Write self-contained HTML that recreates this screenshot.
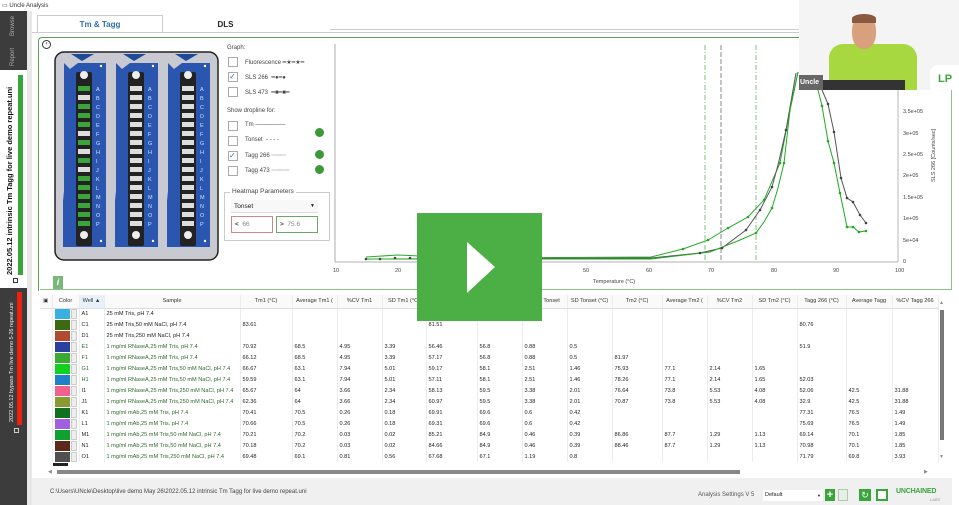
<!DOCTYPE html>
<html><head><meta charset="utf-8"><style>
*{margin:0;padding:0;box-sizing:border-box}
body{width:959px;height:505px;overflow:hidden;background:#fff;font-family:"Liberation Sans",sans-serif;position:relative;color:#222}
.a{position:absolute}
.v{position:absolute;transform:rotate(-90deg);transform-origin:left top;white-space:nowrap}
table{border-collapse:collapse;table-layout:fixed;position:absolute;left:40px;top:295px;font-size:5.6px}
td,th{height:11px;padding:0 2px;white-space:nowrap;overflow:hidden;text-align:left;font-weight:normal;border-right:1px solid #ececec}
th{height:13px;text-align:center;color:#333;border-bottom:1px solid #ddd;background:#fafafa}
.sw{display:inline-block;width:15px;height:10px;vertical-align:middle}
.dd{display:inline-block;width:6px;height:10px;background:#eee;border:1px solid #ccc;vertical-align:middle;margin-left:1px}
.g{color:#2d6a2d}
.cb{position:absolute;width:10px;height:10px;border:1px solid #aaa;background:#fff}
.lb{position:absolute;font-size:6px;color:#444}
.gb{position:absolute;width:9px;height:9px;border-radius:50%;background:#3a9a3a}
</style></head><body>
<!-- title -->
<div class="a" style="left:2px;top:2px;font-size:6px;color:#333">▭ Uncle Analysis</div>
<!-- sidebar -->
<div class="a" style="left:0;top:11px;width:27px;height:494px;background:#3c3c3c"></div>
<div class="v" style="left:10px;top:36px;font-size:6px;color:#aaa">Browse</div>
<div class="v" style="left:10px;top:66px;font-size:6px;color:#aaa">Report</div>
<div class="a" style="left:0;top:70px;width:27px;height:218px;background:#fff"></div>
<div class="v" style="left:5px;top:275px;font-size:7.5px;font-weight:bold;color:#111">2022.05.12 intrinsic Tm Tagg for live demo repeat.uni</div>
<div class="a" style="left:18px;top:75px;width:5px;height:200px;background:#3aa53a"></div>
<div class="a" style="left:13px;top:278px;width:5px;height:5px;border:1px solid #333"></div>
<div class="v" style="left:9px;top:422px;font-size:5.5px;color:#eee">2022.05.12 bypass Tm live demo 5-26 repeat.uni</div>
<div class="a" style="left:17px;top:292px;width:5px;height:133px;background:#f02010"></div>
<div class="a" style="left:14px;top:428px;width:5px;height:5px;border:1px solid #ccc"></div>
<div class="a" style="left:27px;top:11px;width:5px;height:494px;background:#e8e8e8"></div>
<!-- tabs -->
<div class="a" style="left:37px;top:15px;width:126px;height:18px;border:1px solid #ccc;border-bottom:none;background:#fff;font-size:8px;font-weight:bold;color:#2a6fb0;text-align:center;line-height:18px">Tm &amp; Tagg</div>
<div class="a" style="left:163px;top:17px;width:125px;height:16px;font-size:8px;font-weight:bold;color:#222;text-align:center;line-height:16px">DLS</div>
<div class="a" style="left:32px;top:32px;width:927px;height:1px;background:#ccc"></div>
<!-- panel border -->
<div class="a" style="left:38px;top:37px;width:762px;height:254px;border:1px solid #5aa55a;border-right:none;border-bottom:none;border-radius:4px 0 0 0"></div>
<div class="a" style="left:40px;top:289px;width:912px;height:1px;background:#8ac48a"></div>
<div class="a" style="left:951px;top:90px;width:1px;height:200px;background:#8ac48a"></div>
<div class="a" style="left:42px;top:40px;width:9px;height:9px;border:1px solid #333;border-radius:50%;font-size:6px;line-height:7px;text-align:center">‹</div>
<!-- plate -->
<svg class="a" style="left:54px;top:51px" width="166" height="211">
<rect x="1" y="1" width="163" height="208" rx="9" fill="#c9c9d1" stroke="#222" stroke-width="1.5"/>
<g id="s">
<polygon points="10,12 10,140 9,150 9,196 52,196 52,12 24,12 16,18" fill="#2a56b0"/>
<polygon points="17,3 40,3 28,10" fill="#1e4a9a"/>
<rect x="22" y="21" width="16" height="174" fill="#222" rx="2"/>
<circle cx="30" cy="24" r="4" fill="#eee"/><circle cx="30" cy="184" r="4" fill="#eee"/>
<circle cx="47" cy="15" r="1.2" fill="#fff"/><circle cx="47" cy="190" r="1.2" fill="#fff"/>
</g>
<use href="#s" x="52"/><use href="#s" x="104"/>
<g fill="#ddd">
<rect x="24" y="35" width="12" height="5" fill="#3aa53a"/><rect x="24" y="44" width="12" height="5"/><rect x="24" y="53" width="12" height="5" fill="#3aa53a"/><rect x="24" y="62" width="12" height="5" fill="#3aa53a"/><rect x="24" y="71" width="12" height="5" fill="#3aa53a"/><rect x="24" y="80" width="12" height="5"/><rect x="24" y="89" width="12" height="5" fill="#3aa53a"/><rect x="24" y="98" width="12" height="5"/><rect x="24" y="107" width="12" height="5" fill="#3aa53a"/><rect x="24" y="116" width="12" height="5"/><rect x="24" y="125" width="12" height="5" fill="#3aa53a"/><rect x="24" y="134" width="12" height="5" fill="#3aa53a"/><rect x="24" y="143" width="12" height="5" fill="#3aa53a"/><rect x="24" y="152" width="12" height="5" fill="#3aa53a"/><rect x="24" y="161" width="12" height="5" fill="#3aa53a"/><rect x="24" y="170" width="12" height="5" fill="#3aa53a"/>
</g>
<g fill="#ddd" id="c2">
<rect x="76" y="35" width="12" height="5"/><rect x="76" y="44" width="12" height="5"/><rect x="76" y="53" width="12" height="5"/><rect x="76" y="62" width="12" height="5"/><rect x="76" y="71" width="12" height="5"/><rect x="76" y="80" width="12" height="5"/><rect x="76" y="89" width="12" height="5"/><rect x="76" y="98" width="12" height="5"/><rect x="76" y="107" width="12" height="5"/><rect x="76" y="116" width="12" height="5"/><rect x="76" y="125" width="12" height="5"/><rect x="76" y="134" width="12" height="5"/><rect x="76" y="143" width="12" height="5"/><rect x="76" y="152" width="12" height="5"/><rect x="76" y="161" width="12" height="5"/><rect x="76" y="170" width="12" height="5"/>
</g>
<use href="#c2" x="52"/>
<g font-size="5.5" fill="#cfe0ff" font-family="Liberation Sans">
<text x="42" y="40">A</text><text x="42" y="49">B</text><text x="42" y="58">C</text><text x="42" y="67">D</text><text x="42" y="76">E</text><text x="42" y="85">F</text><text x="42" y="94">G</text><text x="42" y="103">H</text><text x="42" y="112">I</text><text x="42" y="121">J</text><text x="42" y="130">K</text><text x="42" y="139">L</text><text x="42" y="148">M</text><text x="42" y="157">N</text><text x="42" y="166">O</text><text x="42" y="175">P</text>
<text x="94" y="40">A</text><text x="94" y="49">B</text><text x="94" y="58">C</text><text x="94" y="67">D</text><text x="94" y="76">E</text><text x="94" y="85">F</text><text x="94" y="94">G</text><text x="94" y="103">H</text><text x="94" y="112">I</text><text x="94" y="121">J</text><text x="94" y="130">K</text><text x="94" y="139">L</text><text x="94" y="148">M</text><text x="94" y="157">N</text><text x="94" y="166">O</text><text x="94" y="175">P</text>
<text x="146" y="40">A</text><text x="146" y="49">B</text><text x="146" y="58">C</text><text x="146" y="67">D</text><text x="146" y="76">E</text><text x="146" y="85">F</text><text x="146" y="94">G</text><text x="146" y="103">H</text><text x="146" y="112">I</text><text x="146" y="121">J</text><text x="146" y="130">K</text><text x="146" y="139">L</text><text x="146" y="148">M</text><text x="146" y="157">N</text><text x="146" y="166">O</text><text x="146" y="175">P</text>
</g>
</svg>
<!-- options -->
<div class="lb" style="left:227px;top:45px">Graph:</div>
<div class="cb" style="left:228px;top:57px"></div><div class="lb" style="left:245px;top:59px">Fluorescence ━★━★━</div>
<div class="cb" style="left:228px;top:72px;color:#2a80d0;font-size:8px;line-height:8px">✓</div><div class="lb" style="left:245px;top:74px">SLS 266 &nbsp;━●━●</div>
<div class="cb" style="left:228px;top:87px"></div><div class="lb" style="left:245px;top:89px">SLS 473 &nbsp;━■━■━</div>
<div class="lb" style="left:227px;top:108px">Show dropline for:</div>
<div class="cb" style="left:228px;top:121px"></div><div class="lb" style="left:245px;top:122px">Tm ───────</div>
<div class="cb" style="left:228px;top:136px"></div><div class="lb" style="left:245px;top:137px">Tonset &nbsp;- - - -</div>
<div class="cb" style="left:228px;top:151px;color:#2a80d0;font-size:8px;line-height:8px">✓</div><div class="lb" style="left:245px;top:152px">Tagg 266 ┈┈┈┈</div>
<div class="cb" style="left:228px;top:166px"></div><div class="lb" style="left:245px;top:167px">Tagg 473 ┈┈┈┈┈</div>
<div class="gb" style="left:315px;top:128px"></div><div class="gb" style="left:315px;top:150px"></div><div class="gb" style="left:315px;top:165px"></div>
<div class="a" style="left:224px;top:192px;width:106px;height:49px;border:1px solid #ccc"></div>
<div class="lb" style="left:230px;top:188px;background:#fff;padding:0 2px;font-size:6.5px">Heatmap Parameters</div>
<div class="a" style="left:231px;top:200px;width:87px;height:13px;background:#f8f8f8;border-bottom:1px solid #ddd;font-size:6.5px;line-height:13px;padding-left:3px">Tonset<span style="float:right;margin-right:3px;font-size:5px">▼</span></div>
<div class="a" style="left:231px;top:216px;width:42px;height:17px;border:1px solid #c88;font-size:6.5px;line-height:15px;padding-left:3px;color:#888"><b style="color:#444">&lt;</b> &nbsp;66</div>
<div class="a" style="left:276px;top:216px;width:42px;height:17px;border:1px solid #6a6;font-size:6.5px;line-height:15px;padding-left:3px;color:#888"><b style="color:#444">&gt;</b> &nbsp;75.6</div>
<div class="a" style="left:53px;top:276px;width:10px;height:13px;background:#7ab87a;color:#fff;font-size:9px;font-style:italic;font-weight:bold;text-align:center;line-height:13px">i</div>
<!-- chart -->
<div class="a" style="left:330px;top:29px;width:470px;height:1px;background:#ccc"></div>
<div class="a" style="left:330px;top:37px;width:470px;height:1px;background:#5aa55a"></div>
<svg class="a" style="left:0;top:0" width="959" height="290" font-family="Liberation Sans">
<line x1="335" y1="44" x2="335" y2="262" stroke="#888" stroke-width="0.7"/>
<line x1="335" y1="262" x2="898" y2="262" stroke="#999" stroke-width="0.7"/>
<line x1="898" y1="90" x2="898" y2="262" stroke="#999" stroke-width="0.7"/>
<g stroke-width="1" stroke-dasharray="5,2,1,2"><line x1="705" y1="45" x2="705" y2="262" stroke="#7ac47a"/><line x1="721" y1="45" x2="721" y2="262" stroke="#888" stroke-dasharray="5,2"/><line x1="756" y1="45" x2="756" y2="262" stroke="#7ac47a"/></g>
<polyline fill="none" stroke="#2aaa2a" stroke-width="1" points="366,257 398,255 420,256 460,258 651,257 683,249 708,240 728,228 748,217 764,200 780,163 790,110 798,72"/>
<polyline fill="none" stroke="#555" stroke-width="1" points="366,259 651,258 700,253 722,248 746,230 760,210 772,187 778,165 786,130 796,73"/>
<polyline fill="none" stroke="#22aa22" stroke-width="1" points="366,259 651,259 710,252 740,240 756,233 764,222 772,208 778,188 784,163 790,110 798,72"/>
<polyline fill="none" stroke="#555" stroke-width="1" points="822,90 828,104 834,132 841,178 847,198 853,202 860,215 866,223"/>
<polyline fill="none" stroke="#22aa22" stroke-width="1" points="818,90 822,106 828,141 834,163 840,193 847,227 853,227 859,232 866,231"/>
<g fill="#444"><circle cx="366" cy="259" r="1.3"/><circle cx="380" cy="259" r="1.3"/><circle cx="395" cy="258" r="1.3"/><circle cx="410" cy="258" r="1.3"/><circle cx="700" cy="253" r="1.3"/><circle cx="722" cy="248" r="1.3"/><circle cx="746" cy="230" r="1.3"/><circle cx="760" cy="210" r="1.3"/><circle cx="772" cy="187" r="1.3"/><circle cx="786" cy="130" r="1.3"/><circle cx="828" cy="104" r="1.3"/><circle cx="834" cy="132" r="1.3"/><circle cx="841" cy="178" r="1.3"/><circle cx="847" cy="198" r="1.3"/><circle cx="853" cy="202" r="1.3"/><circle cx="860" cy="215" r="1.3"/><circle cx="866" cy="223" r="1.3"/></g>
<g fill="#22aa22"><circle cx="683" cy="249" r="1.3"/><circle cx="708" cy="240" r="1.3"/><circle cx="728" cy="228" r="1.3"/><circle cx="748" cy="217" r="1.3"/><circle cx="764" cy="200" r="1.3"/><circle cx="780" cy="163" r="1.3"/><circle cx="756" cy="233" r="1.3"/><circle cx="772" cy="208" r="1.3"/><circle cx="784" cy="163" r="1.3"/><circle cx="822" cy="106" r="1.3"/><circle cx="828" cy="141" r="1.3"/><circle cx="834" cy="163" r="1.3"/><circle cx="840" cy="193" r="1.3"/><circle cx="847" cy="227" r="1.3"/><circle cx="853" cy="227" r="1.3"/><circle cx="859" cy="232" r="1.3"/><circle cx="866" cy="231" r="1.3"/></g>
<g font-size="5.5" fill="#444"><text x="333" y="272">10</text><text x="395" y="272">20</text><text x="457" y="272">30</text><text x="520" y="272">40</text><text x="583" y="272">50</text><text x="646" y="272">60</text><text x="708" y="272">70</text><text x="771" y="272">80</text><text x="833" y="272">90</text><text x="895" y="272">100</text>
<text x="593" y="283">Temperature (°C)</text>
<text x="903" y="113">3.5e+05</text><text x="903" y="135">3e+05</text><text x="903" y="156">2.5e+05</text><text x="903" y="177">2e+05</text><text x="903" y="199">1.5e+05</text><text x="903" y="220">1e+05</text><text x="903" y="242">5e+04</text><text x="903" y="263">0</text>
<text transform="translate(935,182) rotate(-90)">SLS 266 [Counts/sec]</text></g>
</svg>
<!-- webcam -->
<div class="a" style="left:799px;top:0;width:160px;height:90px;background:#f4f4f4"></div>
<div class="a" style="left:829px;top:44px;width:88px;height:46px;background:#a8d840;border-radius:14px 14px 0 0"></div>
<div class="a" style="left:852px;top:15px;width:24px;height:34px;background:#d9a07e;border-radius:45%"></div>
<div class="a" style="left:852px;top:14px;width:24px;height:9px;background:#8a5a40;border-radius:50% 50% 0 0"></div>
<div class="a" style="left:822px;top:80px;width:83px;height:10px;background:#333"></div>
<div class="a" style="left:930px;top:65px;width:29px;height:25px;background:#fff;border-radius:8px 0 0 0;color:#3aa53a;font-weight:bold;font-size:11px;padding:8px 0 0 8px">LP</div>
<div class="a" style="left:799px;top:75px;width:24px;height:15px;background:#666;color:#fff;font-size:7px;font-weight:bold;line-height:15px;padding-left:1px">Uncle</div>
<!-- table -->
<table>
<colgroup><col style="width:12px"><col style="width:24px"><col style="width:25px"><col style="width:136px"><col style="width:52px"><col style="width:45px"><col style="width:45px"><col style="width:44px"><col style="width:51px"><col style="width:45px"><col style="width:45px"><col style="width:45px"><col style="width:50px"><col style="width:45px"><col style="width:45px"><col style="width:45px"><col style="width:49px"><col style="width:46px"><col style="width:46px"></colgroup>
<tr><th>▣</th><th>Color</th><th style="background:#e8f0fa">Well ▲</th><th>Sample</th><th>Tm1 (°C)</th><th>Average Tm1 (</th><th>%CV Tm1</th><th>SD Tm1 (°C)</th><th>Tonset (°C)</th><th>Average Tonse</th><th>%CV Tonset</th><th>SD Tonset (°C)</th><th>Tm2 (°C)</th><th>Average Tm2 (</th><th>%CV Tm2</th><th>SD Tm2 (°C)</th><th>Tagg 266 (°C)</th><th>Average Tagg</th><th>%CV Tagg 266</th></tr>
<tr><td></td><td><span class="sw" style="background:#3ab0e0"></span><span class="dd"></span></td><td>A1</td><td>25 mM Tris, pH 7.4</td><td></td><td></td><td></td><td></td><td></td><td></td><td></td><td></td><td></td><td></td><td></td><td></td><td></td><td></td><td></td></tr>
<tr><td></td><td><span class="sw" style="background:#3d6a10"></span><span class="dd"></span></td><td>C1</td><td>25 mM Tris,50 mM NaCl, pH 7.4</td><td>83.61</td><td></td><td></td><td></td><td>81.51</td><td></td><td></td><td></td><td></td><td></td><td></td><td></td><td>80.76</td><td></td><td></td></tr>
<tr><td></td><td><span class="sw" style="background:#b04a30"></span><span class="dd"></span></td><td>D1</td><td>25 mM Tris,250 mM NaCl, pH 7.4</td><td></td><td></td><td></td><td></td><td></td><td></td><td></td><td></td><td></td><td></td><td></td><td></td><td></td><td></td><td></td></tr>
<tr><td></td><td><span class="sw" style="background:#2a3fa0"></span><span class="dd"></span></td><td class="g">E1</td><td class="g">1 mg/ml RNaseA,25 mM Tris, pH 7.4</td><td>70.92</td><td>68.5</td><td>4.95</td><td>3.39</td><td>56.46</td><td>56.8</td><td>0.88</td><td>0.5</td><td></td><td></td><td></td><td></td><td>51.9</td><td></td><td></td></tr>
<tr><td></td><td><span class="sw" style="background:#3aaa30"></span><span class="dd"></span></td><td class="g">F1</td><td class="g">1 mg/ml RNaseA,25 mM Tris, pH 7.4</td><td>66.12</td><td>68.5</td><td>4.95</td><td>3.39</td><td>57.17</td><td>56.8</td><td>0.88</td><td>0.5</td><td>81.97</td><td></td><td></td><td></td><td></td><td></td><td></td></tr>
<tr><td></td><td><span class="sw" style="background:#10d020"></span><span class="dd"></span></td><td class="g">G1</td><td class="g">1 mg/ml RNaseA,25 mM Tris,50 mM NaCl, pH 7.4</td><td>66.67</td><td>63.1</td><td>7.94</td><td>5.01</td><td>59.17</td><td>58.1</td><td>2.51</td><td>1.46</td><td>75.93</td><td>77.1</td><td>2.14</td><td>1.65</td><td></td><td></td><td></td></tr>
<tr><td></td><td><span class="sw" style="background:#2080c8"></span><span class="dd"></span></td><td class="g">H1</td><td class="g">1 mg/ml RNaseA,25 mM Tris,50 mM NaCl, pH 7.4</td><td>59.59</td><td>63.1</td><td>7.94</td><td>5.01</td><td>57.11</td><td>58.1</td><td>2.51</td><td>1.46</td><td>78.26</td><td>77.1</td><td>2.14</td><td>1.65</td><td>52.03</td><td></td><td></td></tr>
<tr><td></td><td><span class="sw" style="background:#f06090"></span><span class="dd"></span></td><td>I1</td><td class="g">1 mg/ml RNaseA,25 mM Tris,250 mM NaCl, pH 7.4</td><td>65.67</td><td>64</td><td>3.66</td><td>2.34</td><td>58.13</td><td>59.5</td><td>3.38</td><td>2.01</td><td>76.64</td><td>73.8</td><td>5.53</td><td>4.08</td><td>52.06</td><td>42.5</td><td>31.88</td></tr>
<tr><td></td><td><span class="sw" style="background:#8a9a30"></span><span class="dd"></span></td><td>J1</td><td class="g">1 mg/ml RNaseA,25 mM Tris,250 mM NaCl, pH 7.4</td><td>62.36</td><td>64</td><td>3.66</td><td>2.34</td><td>60.97</td><td>59.5</td><td>3.38</td><td>2.01</td><td>70.87</td><td>73.8</td><td>5.53</td><td>4.08</td><td>32.9</td><td>42.5</td><td>31.88</td></tr>
<tr><td></td><td><span class="sw" style="background:#107020"></span><span class="dd"></span></td><td>K1</td><td class="g">1 mg/ml mAb,25 mM Tris, pH 7.4</td><td>70.41</td><td>70.5</td><td>0.26</td><td>0.18</td><td>69.91</td><td>69.6</td><td>0.6</td><td>0.42</td><td></td><td></td><td></td><td></td><td>77.31</td><td>76.5</td><td>1.49</td></tr>
<tr><td></td><td><span class="sw" style="background:#a060e0"></span><span class="dd"></span></td><td>L1</td><td class="g">1 mg/ml mAb,25 mM Tris, pH 7.4</td><td>70.66</td><td>70.5</td><td>0.26</td><td>0.18</td><td>69.31</td><td>69.6</td><td>0.6</td><td>0.42</td><td></td><td></td><td></td><td></td><td>75.69</td><td>76.5</td><td>1.49</td></tr>
<tr><td></td><td><span class="sw" style="background:#10a030"></span><span class="dd"></span></td><td>M1</td><td class="g">1 mg/ml mAb,25 mM Tris,50 mM NaCl, pH 7.4</td><td>70.21</td><td>70.2</td><td>0.03</td><td>0.02</td><td>85.21</td><td>84.9</td><td>0.46</td><td>0.39</td><td>86.86</td><td>87.7</td><td>1.29</td><td>1.13</td><td>69.14</td><td>70.1</td><td>1.85</td></tr>
<tr><td></td><td><span class="sw" style="background:#5a2a1a"></span><span class="dd"></span></td><td>N1</td><td class="g">1 mg/ml mAb,25 mM Tris,50 mM NaCl, pH 7.4</td><td>70.18</td><td>70.2</td><td>0.03</td><td>0.02</td><td>84.66</td><td>84.9</td><td>0.46</td><td>0.39</td><td>88.46</td><td>87.7</td><td>1.29</td><td>1.13</td><td>70.98</td><td>70.1</td><td>1.85</td></tr>
<tr><td></td><td><span class="sw" style="background:#505050"></span><span class="dd"></span></td><td>O1</td><td class="g">1 mg/ml mAb,25 mM Tris,250 mM NaCl, pH 7.4</td><td>69.48</td><td>69.1</td><td>0.81</td><td>0.56</td><td>67.68</td><td>67.1</td><td>1.19</td><td>0.8</td><td></td><td></td><td></td><td></td><td>71.79</td><td>69.8</td><td>3.93</td></tr>
</table>
<div class="a" style="left:53px;top:463px;width:15px;height:3px;background:#222"></div>
<div class="a" style="left:940px;top:310px;width:4px;height:130px;background:#777"></div>
<div class="a" style="left:939px;top:300px;font-size:5px;color:#888">▲</div>
<div class="a" style="left:939px;top:454px;font-size:5px;color:#888">▼</div>
<div class="a" style="left:57px;top:470px;width:683px;height:4px;background:#888"></div>
<div class="a" style="left:48px;top:469px;font-size:5px;color:#888">◀</div>
<div class="a" style="left:924px;top:469px;font-size:5px;color:#888">▶</div>
<!-- status bar -->
<div class="a" style="left:32px;top:478px;width:920px;height:27px;background:#f0f0f0"></div>
<div class="a" style="left:50px;top:489px;font-size:6px;color:#444">C:\Users\UNcle\Desktop\live demo May 26\2022.05.12 intrinsic Tm Tagg for live demo repeat.uni</div>
<div class="a" style="left:698px;top:492px;font-size:6px;color:#555">Analysis Settings V 5</div>
<div class="a" style="left:763px;top:490px;width:60px;height:11px;background:#fff;font-size:5.5px;line-height:11px;padding-left:2px">Default<span style="float:right;margin-right:2px;font-size:4px">▼</span></div>
<div class="a" style="left:825px;top:489px;width:10px;height:12px;background:#3aa53a;color:#fff;font-size:11px;font-weight:bold;line-height:12px;text-align:center">+</div>
<div class="a" style="left:838px;top:489px;width:10px;height:12px;border:1px solid #aca;background:#e6f0e6"></div>
<div class="a" style="left:859px;top:489px;width:12px;height:12px;background:#3aa53a;color:#fff;font-size:9px;line-height:12px;text-align:center">↻</div>
<div class="a" style="left:876px;top:489px;width:12px;height:12px;background:#3aa53a;border:2px solid #3aa53a;background:#fff"></div>
<div class="a" style="left:896px;top:488px;font-size:7px;font-weight:bold;color:#3aa53a;letter-spacing:-0.2px">UNCHAINED</div>
<div class="a" style="left:930px;top:497px;font-size:4px;color:#999">LABS</div>
<!-- play button -->
<div class="a" style="left:417px;top:213px;width:125px;height:108px;background:#4caf45"></div>
<svg class="a" style="left:465px;top:240px" width="32" height="55"><polygon points="2,2 30,27 2,53" fill="#fff"/></svg>
</body></html>
